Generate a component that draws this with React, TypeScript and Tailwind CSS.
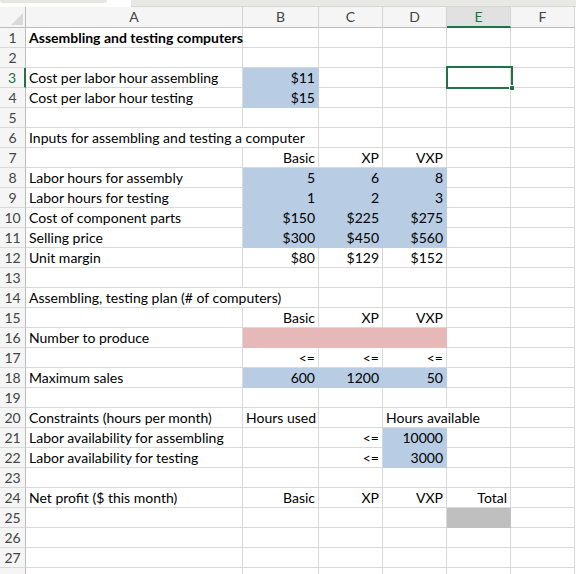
import React from "react";

type Cell = {
  c: number; // 0 = A
  t: string;
  span?: number;
  right?: boolean;
  bold?: boolean;
};

const COLS = ["A", "B", "C", "D", "E", "F"];

// fills by "row:col"
const FILLS: Record<string, "blue" | "pink" | "gray"> = {
  "3:1": "blue",
  "4:1": "blue",
  "8:1": "blue", "8:2": "blue", "8:3": "blue",
  "9:1": "blue", "9:2": "blue", "9:3": "blue",
  "10:1": "blue", "10:2": "blue", "10:3": "blue",
  "11:1": "blue", "11:2": "blue", "11:3": "blue",
  "16:1": "pink", "16:2": "pink", "16:3": "pink",
  "18:1": "blue", "18:2": "blue", "18:3": "blue",
  "21:3": "blue",
  "22:3": "blue",
  "25:4": "gray",
};

const FILL_CLASS = {
  blue: "bg-[#b8cce4] border-[#b8cce4]",
  pink: "bg-[#e6b8b7] border-[#e6b8b7]",
  gray: "bg-[#bfbfbf] border-[#bfbfbf]",
};

const R = (c: number, t: string): Cell => ({ c, t, right: true });
const L = (c: number, t: string, span?: number): Cell => ({ c, t, span });

const DATA: Record<number, Cell[]> = {
  1: [{ c: 0, t: "Assembling and testing computers", bold: true }],
  3: [L(0, "Cost per labor hour assembling"), R(1, "$11")],
  4: [L(0, "Cost per labor hour testing"), R(1, "$15")],
  6: [L(0, "Inputs for assembling and testing a computer", 2)],
  7: [R(1, "Basic"), R(2, "XP"), R(3, "VXP")],
  8: [L(0, "Labor hours for assembly"), R(1, "5"), R(2, "6"), R(3, "8")],
  9: [L(0, "Labor hours for testing"), R(1, "1"), R(2, "2"), R(3, "3")],
  10: [L(0, "Cost of component parts"), R(1, "$150"), R(2, "$225"), R(3, "$275")],
  11: [L(0, "Selling price"), R(1, "$300"), R(2, "$450"), R(3, "$560")],
  12: [L(0, "Unit margin"), R(1, "$80"), R(2, "$129"), R(3, "$152")],
  14: [L(0, "Assembling, testing plan (# of computers)", 2)],
  15: [R(1, "Basic"), R(2, "XP"), R(3, "VXP")],
  16: [L(0, "Number to produce")],
  17: [R(1, "<="), R(2, "<="), R(3, "<=")],
  18: [L(0, "Maximum sales"), R(1, "600"), R(2, "1200"), R(3, "50")],
  20: [L(0, "Constraints (hours per month)"), L(1, "Hours used"), L(3, "Hours available", 2)],
  21: [L(0, "Labor availability for assembling"), R(2, "<="), R(3, "10000")],
  22: [L(0, "Labor availability for testing"), R(2, "<="), R(3, "3000")],
  24: [L(0, "Net profit ($ this month)"), R(1, "Basic"), R(2, "XP"), R(3, "VXP"), R(4, "Total")],
};

const GRID = "grid grid-cols-[26px_217px_76px_64px_64px_64px_64px]";

function SheetRow({ n }: { n: number }) {
  const cells = DATA[n] ?? [];
  const out: React.ReactNode[] = [];
  let col = 0;
  while (col < 6) {
    const cell = cells.find((x) => x.c === col);
    const span = cell?.span ?? 1;
    const fill = FILLS[`${n}:${col}`];
    const spanClass = span === 2 ? "col-span-2" : "";
    const isSel = n === 3 && col === 4;
    out.push(
      <div
        key={col}
        className={`relative h-5 border-r border-b flex items-center px-[3px] whitespace-nowrap text-[14px] leading-[18px] text-black ${spanClass} ${
          fill ? FILL_CLASS[fill] : "border-[#d9d9d9]"
        } ${cell?.right ? "justify-end" : "justify-start"} ${cell?.bold ? "font-bold" : ""}`}
      >
        {cell?.t}
        {isSel && (
          <div className="absolute -left-px -top-[2px] w-[67px] h-[23px] border-2 border-[#217346] z-10">
            <div className="absolute -right-[4px] -bottom-[4px] w-[6px] h-[6px] bg-[#217346] border border-white" />
          </div>
        )}
      </div>
    );
    col += span;
  }
  const selRow = n === 3;
  return (
    <div className={GRID}>
      <div
        className={`h-5 flex items-center justify-center bg-[#f5f5f5] border-b text-[14px] leading-[18px] ${
          selRow
            ? "border-r-2 border-r-[#217346] border-b-[#d9d9d9] text-[#217346]"
            : "border-r border-r-[#bdbdbd] border-b-[#d9d9d9] text-[#444]"
        }`}
      >
        {n < 28 ? n : null}
      </div>
      {out}
    </div>
  );
}

export default function App() {
  const rows = Array.from({ length: 28 }, (_, i) => i + 1);
  return (
    <div
      className="w-[576px] h-[574px] overflow-hidden bg-white select-none"
      style={{ fontFamily: "Lato, 'Open Sans', sans-serif" }}
    >
      {/* top strip (formula bar remnants) */}
      <div className="h-[7px] flex bg-white">
        <div className="w-[107px] h-[3px] bg-[#e6e6e2] rounded-b-sm" />
        <div className="w-[24px]" />
        <div className="flex-1 bg-[#e8e8e4] border-b border-[#d6d6d2]" />
      </div>

      {/* column headers */}
      <div className={GRID}>
        <div className="relative h-[21px] bg-[#f5f5f5] border-r border-b border-[#bdbdbd]">
          <svg className="absolute right-[2px] bottom-[2px]" width="12" height="12" viewBox="0 0 12 12">
            <polygon points="12,0 12,12 0,12" fill="#d9d9d9" />
          </svg>
        </div>
        {COLS.map((c, i) => (
          <div
            key={c}
            className={`h-[21px] flex items-center justify-center text-[14px] leading-[18px] border-r ${
              i === 4
                ? "bg-[#e1e1e1] border-r-[#d4d4d4] border-b-2 border-b-[#217346] text-[#217346]"
                : "bg-[#f5f5f5] border-r-[#d4d4d4] border-b border-b-[#bdbdbd] text-[#444]"
            }`}
          >
            {c}
          </div>
        ))}
      </div>

      {rows.map((n) => (
        <SheetRow key={n} n={n} />
      ))}
    </div>
  );
}
